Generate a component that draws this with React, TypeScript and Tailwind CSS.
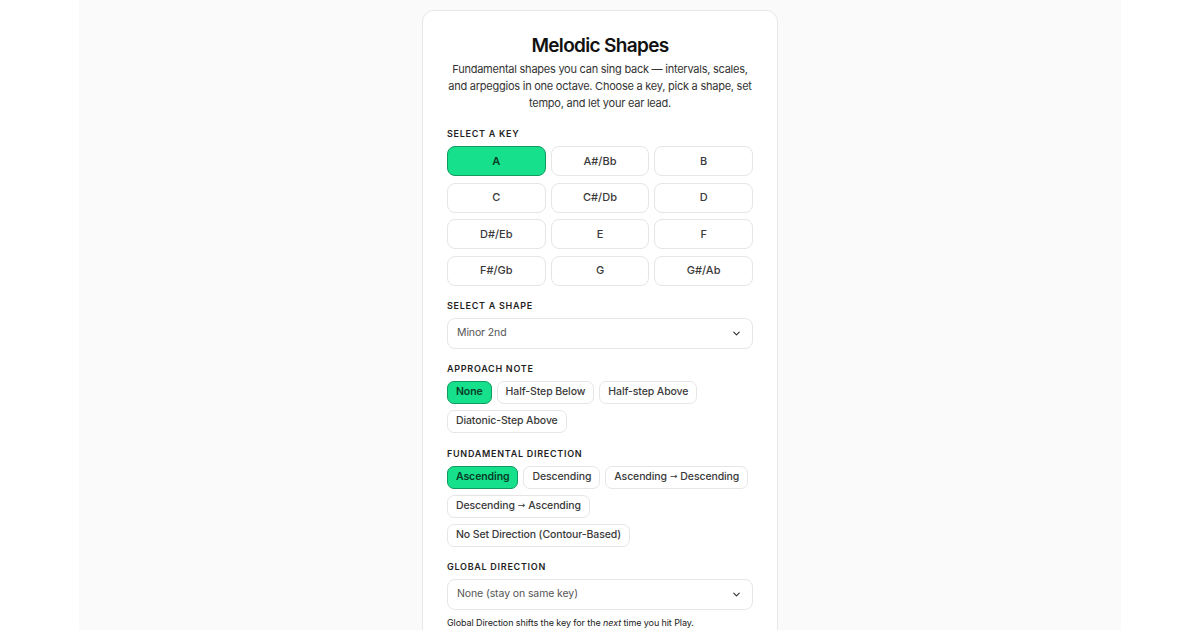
import React from "react";
import { ChevronDown } from "lucide-react";

const keys = ["A", "A#/Bb", "B", "C", "C#/Db", "D", "D#/Eb", "E", "F", "F#/Gb", "G", "G#/Ab"];

function Label({ children }: { children: React.ReactNode }) {
  return (
    <div className="text-[9px] font-semibold tracking-[0.08em] uppercase text-[#1f1f1f] leading-[12px] mb-[6px]">
      {children}
    </div>
  );
}

function Arrow() {
  return <span className="inline-block text-[9px] align-[1px] px-[3px]" style={{ fontFamily: "'DejaVu Sans', sans-serif" }}>→</span>;
}

function Pill({ children, active }: { children: React.ReactNode; active?: boolean }) {
  return (
    <button
      className={
        active
          ? "h-[23px] px-[8px] rounded-[7px] border border-[#0f9a5e] bg-[#16e08c] text-[#063d25] text-[10.5px] tracking-[-0.01em] font-semibold leading-none"
          : "h-[23px] px-[8px] rounded-[7px] border border-[#e6e6e6] bg-white text-[#3a3a3a] text-[10.5px] tracking-[-0.01em] font-medium leading-none"
      }
    >
      {children}
    </button>
  );
}

function Select({ value }: { value: string }) {
  return (
    <div className="h-[31px] rounded-[8px] border border-[#e6e6e6] bg-white flex items-center justify-between pl-[9px] pr-[10px]">
      <span className="text-[10.5px] tracking-[-0.01em] text-[#555]">{value}</span>
      <ChevronDown size={11} strokeWidth={2.5} className="text-[#333]" />
    </div>
  );
}

export default function App() {
  return (
    <div className="min-h-[630px] bg-white" style={{ fontFamily: "Inter, 'Noto Sans', sans-serif" }}>
      <div className="mx-auto w-[1042px] min-h-[630px] bg-[#fafafa] pt-[10px]">
        <div className="mx-auto w-[356px] bg-white border border-[#e8e8e8] rounded-[12px] px-[24px] pt-[22px] pb-6">
          <h1 className="text-center text-[19px] font-semibold tracking-[-0.035em] text-[#111] leading-[26px]">
            Melodic Shapes
          </h1>
          <p className="mt-[2px] text-center text-[11px] tracking-[-0.022em] leading-[17px] text-[#333]">
            Fundamental shapes you can sing back — intervals, scales, and arpeggios in one octave. Choose a key, pick a
            shape, set tempo, and let your ear lead.
          </p>

          <div className="mt-[16px]">
            <Label>Select a key</Label>
            <div className="grid grid-cols-3 gap-x-[5px] gap-y-[6.5px]">
              {keys.map((k, i) => (
                <button
                  key={k}
                  className={
                    i === 0
                      ? "h-[30px] rounded-[8px] border border-[#0f9a5e] bg-[#16e08c] text-[#063d25] text-[11px] font-semibold"
                      : "h-[30px] rounded-[8px] border border-[#e6e6e6] bg-white text-[#3a3a3a] text-[11px] font-medium"
                  }
                >
                  {k}
                </button>
              ))}
            </div>
          </div>

          <div className="mt-[14px]">
            <Label>Select a shape</Label>
            <Select value="Minor 2nd" />
          </div>

          <div className="mt-[14px]">
            <Label>Approach note</Label>
            <div className="flex flex-wrap gap-x-[5px] gap-y-[6px]">
              <Pill active>None</Pill>
              <Pill>Half-Step Below</Pill>
              <Pill>Half-step Above</Pill>
              <Pill>Diatonic-Step Above</Pill>
            </div>
          </div>

          <div className="mt-[15px]">
            <Label>Fundamental direction</Label>
            <div className="flex flex-wrap gap-x-[5px] gap-y-[6px]">
              <Pill active>Ascending</Pill>
              <Pill>Descending</Pill>
              <Pill>Ascending<Arrow />Descending</Pill>
              <Pill>Descending<Arrow />Ascending</Pill>
              <Pill>No Set Direction (Contour-Based)</Pill>
            </div>
          </div>

          <div className="mt-[14px]">
            <Label>Global direction</Label>
            <Select value="None (stay on same key)" />
            <p className="mt-[6px] text-[9px] tracking-[-0.01em] text-[#222]">
              Global Direction shifts the key for the <em>next</em> time you hit Play.
            </p>
          </div>
        </div>
      </div>
    </div>
  );
}
